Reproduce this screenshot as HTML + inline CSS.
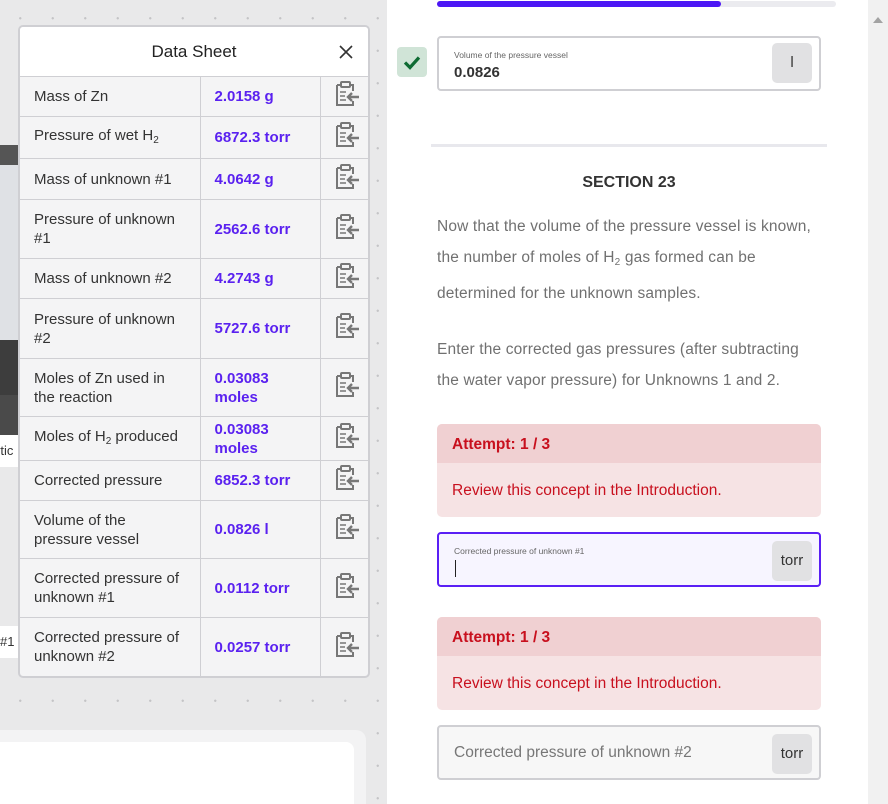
<!DOCTYPE html>
<html><head><meta charset="utf-8"><style>
*{box-sizing:border-box;margin:0;padding:0}
body{width:888px;height:804px;overflow:hidden;position:relative;font-family:"Liberation Sans",sans-serif;background:#fff}
.a{position:absolute}
#left{left:0;top:0;width:387px;height:804px;background-color:#e9e9ea;background-image:radial-gradient(circle,#c4c4c6 1px,transparent 1.3px);background-size:32.5px 32.5px;background-position:4px 2px}
.panel{left:18px;top:25px;width:352px;height:653px;background:#f4f4f5;border:2px solid #cfcfd3;border-radius:5px;overflow:hidden}
.hdr{height:49px;background:#fff;text-align:center;font-size:17px;line-height:50px;color:#222;position:relative}
.x{position:absolute;right:14px;top:17px}
table{border-collapse:collapse;width:350px;table-layout:fixed}
td{border:1px solid #cfcfd3;font-size:15px;color:#333;padding:0 0 0 14px;line-height:19px;vertical-align:middle}
td.v{color:#5a21f0;font-weight:bold;padding-left:14px;width:120px}
td.i{width:51px;padding:0;text-align:center}
td:first-child{border-left:none;width:180px}
td.i{border-right:none}
sub{font-size:10px;vertical-align:-3px}
.sec{font-size:15.5px;color:#707070;line-height:31px;letter-spacing:0.15px;white-space:nowrap}
.inp{border:2px solid #cfcfd3;border-radius:4px;background:#fff}
.unit{position:absolute;right:7px;top:5px;width:40px;height:40px;background:#e1e1e3;border-radius:5px;text-align:center;line-height:40px;font-size:15px;color:#333}
.alert{left:437px;width:384px;height:93px;background:#f6e3e4;border-radius:5px;overflow:hidden}
.alert .h{height:39px;background:#f0d0d2;color:#c8101e;font-weight:bold;font-size:15.5px;line-height:41px;padding-left:15px}
.alert .b{color:#c8101e;font-size:15.5px;line-height:55px;padding-left:15px}
</style></head><body>
<div id="left" class="a"></div>
<div class="a" style="left:0;top:145px;width:18px;height:20px;background:#555"></div>
<div class="a" style="left:0;top:165px;width:18px;height:175px;background:#dfe1e5"></div>
<div class="a" style="left:0;top:340px;width:18px;height:55px;background:#3d3d3d"></div>
<div class="a" style="left:0;top:395px;width:18px;height:40px;background:#4a4a4a"></div>
<div class="a" style="left:0;top:435px;width:18px;height:32px;background:#fff;font-size:13px;color:#333;line-height:32px;text-indent:-4px">rtic</div>
<div class="a" style="left:0;top:626px;width:18px;height:32px;background:#fff;font-size:13px;color:#333;line-height:32px">#1</div>
<div class="a" style="left:0;top:730px;width:366px;height:74px;background:#f3f3f4;border-radius:0 10px 0 0"></div>
<div class="a" style="left:0;top:742px;width:354px;height:62px;background:#fff;border-radius:0 8px 0 0"></div>

<div class="a panel">
<div class="hdr">Data Sheet<svg class="x" width="16" height="16"><path d="M2 2L14 14M14 2L2 14" stroke="#333" stroke-width="1.6"/></svg></div>
<table>
<tr style="height:40px"><td>Mass of Zn</td><td class="v">2.0158 g</td><td class="i">CB</td></tr>
<tr style="height:42px"><td>Pressure of wet H<sub>2</sub></td><td class="v">6872.3 torr</td><td class="i">CB</td></tr>
<tr style="height:41px"><td>Mass of unknown #1</td><td class="v">4.0642 g</td><td class="i">CB</td></tr>
<tr style="height:59px"><td>Pressure of unknown<br>#1</td><td class="v">2562.6 torr</td><td class="i">CB</td></tr>
<tr style="height:40px"><td>Mass of unknown #2</td><td class="v">4.2743 g</td><td class="i">CB</td></tr>
<tr style="height:60px"><td>Pressure of unknown<br>#2</td><td class="v">5727.6 torr</td><td class="i">CB</td></tr>
<tr style="height:58px"><td>Moles of Zn used in<br>the reaction</td><td class="v">0.03083<br>moles</td><td class="i">CB</td></tr>
<tr style="height:44px"><td>Moles of H<sub>2</sub> produced</td><td class="v">0.03083<br>moles</td><td class="i">CB</td></tr>
<tr style="height:40px"><td>Corrected pressure</td><td class="v">6852.3 torr</td><td class="i">CB</td></tr>
<tr style="height:58px"><td>Volume of the<br>pressure vessel</td><td class="v">0.0826 l</td><td class="i">CB</td></tr>
<tr style="height:59px"><td>Corrected pressure of<br>unknown #1</td><td class="v">0.0112 torr</td><td class="i">CB</td></tr>
<tr style="height:59px"><td>Corrected pressure of<br>unknown #2</td><td class="v">0.0257 torr</td><td class="i">CB</td></tr>
</table>
</div>

<div class="a" style="left:868px;top:0;width:20px;height:804px;background:#f1f1f1"></div>
<div class="a" style="left:873px;top:17px;width:0;height:0;border-left:5px solid transparent;border-right:5px solid transparent;border-bottom:6px solid #a3a3a3"></div>
<div class="a" style="left:437px;top:1px;width:399px;height:6px;background:#ebebef;border-radius:3px"></div>
<div class="a" style="left:437px;top:1px;width:284px;height:6px;background:#4c16f5;border-radius:3px"></div>

<div class="a" style="left:397px;top:47px;width:30px;height:30px;background:#d0e4d7;border-radius:4px">
<svg width="30" height="30"><path d="M8 15.5l5 5 9-10" stroke="#0e6b33" stroke-width="3.2" fill="none"/></svg></div>
<div class="a inp" style="left:437px;top:36px;width:384px;height:55px">
<div class="a" style="left:15px;top:12px;font-size:8.5px;color:#666">Volume of the pressure vessel</div>
<div class="a" style="left:15px;top:26px;font-size:15px;font-weight:bold;color:#333">0.0826</div>
<div class="unit" style="top:5px">l</div>
</div>
<div class="a" style="left:431px;top:144px;width:396px;height:3px;background:#e8e8ed"></div>
<div class="a" style="left:437px;top:174px;width:384px;text-align:center;font-weight:bold;font-size:16px;color:#333">SECTION 23</div>
<div class="a sec" style="left:437px;top:211px;width:390px">Now that the volume of the pressure vessel is known,<br>the number of moles of H<sub>2</sub> gas formed can be<br>determined for the unknown samples.</div>
<div class="a sec" style="left:437px;top:334px;width:390px">Enter the corrected gas pressures (after subtracting<br>the water vapor pressure) for Unknowns 1 and 2.</div>

<div class="a alert" style="top:424px"><div class="h">Attempt: 1 / 3</div><div class="b">Review this concept in the Introduction.</div></div>
<div class="a inp" style="left:437px;top:532px;width:384px;height:55px;border-color:#5a1ff5;background:#f7f5ff">
<div class="a" style="left:15px;top:12px;font-size:8.5px;color:#666">Corrected pressure of unknown #1</div>
<div class="a" style="left:16px;top:26px;width:1px;height:17px;background:#222"></div>
<div class="unit" style="top:7px">torr</div>
</div>
<div class="a alert" style="top:617px"><div class="h">Attempt: 1 / 3</div><div class="b">Review this concept in the Introduction.</div></div>
<div class="a inp" style="left:437px;top:725px;width:384px;height:55px;background:#f7f7f7">
<div class="a" style="left:15px;top:17px;font-size:15.5px;color:#777">Corrected pressure of unknown #2</div>
<div class="unit" style="top:7px">torr</div>
</div>

<script>
document.querySelectorAll('td.i').forEach(function(t){t.innerHTML='<svg width="26" height="28" viewBox="0 0 26 28"><path d="M4 5h4M17 5h3v6M20 21v4H4V5" stroke="#777" stroke-width="2" fill="none"/><rect x="8" y="2" width="9" height="5" rx="1" stroke="#777" stroke-width="2" fill="#f4f4f5"/><path d="M7 12h6M7 16h5M7 20h6" stroke="#777" stroke-width="1.6"/><path d="M26 17h-11M19 13l-4 4 4 4" stroke="#777" stroke-width="2.4" fill="none"/></svg>';});
</script>
</body></html>
